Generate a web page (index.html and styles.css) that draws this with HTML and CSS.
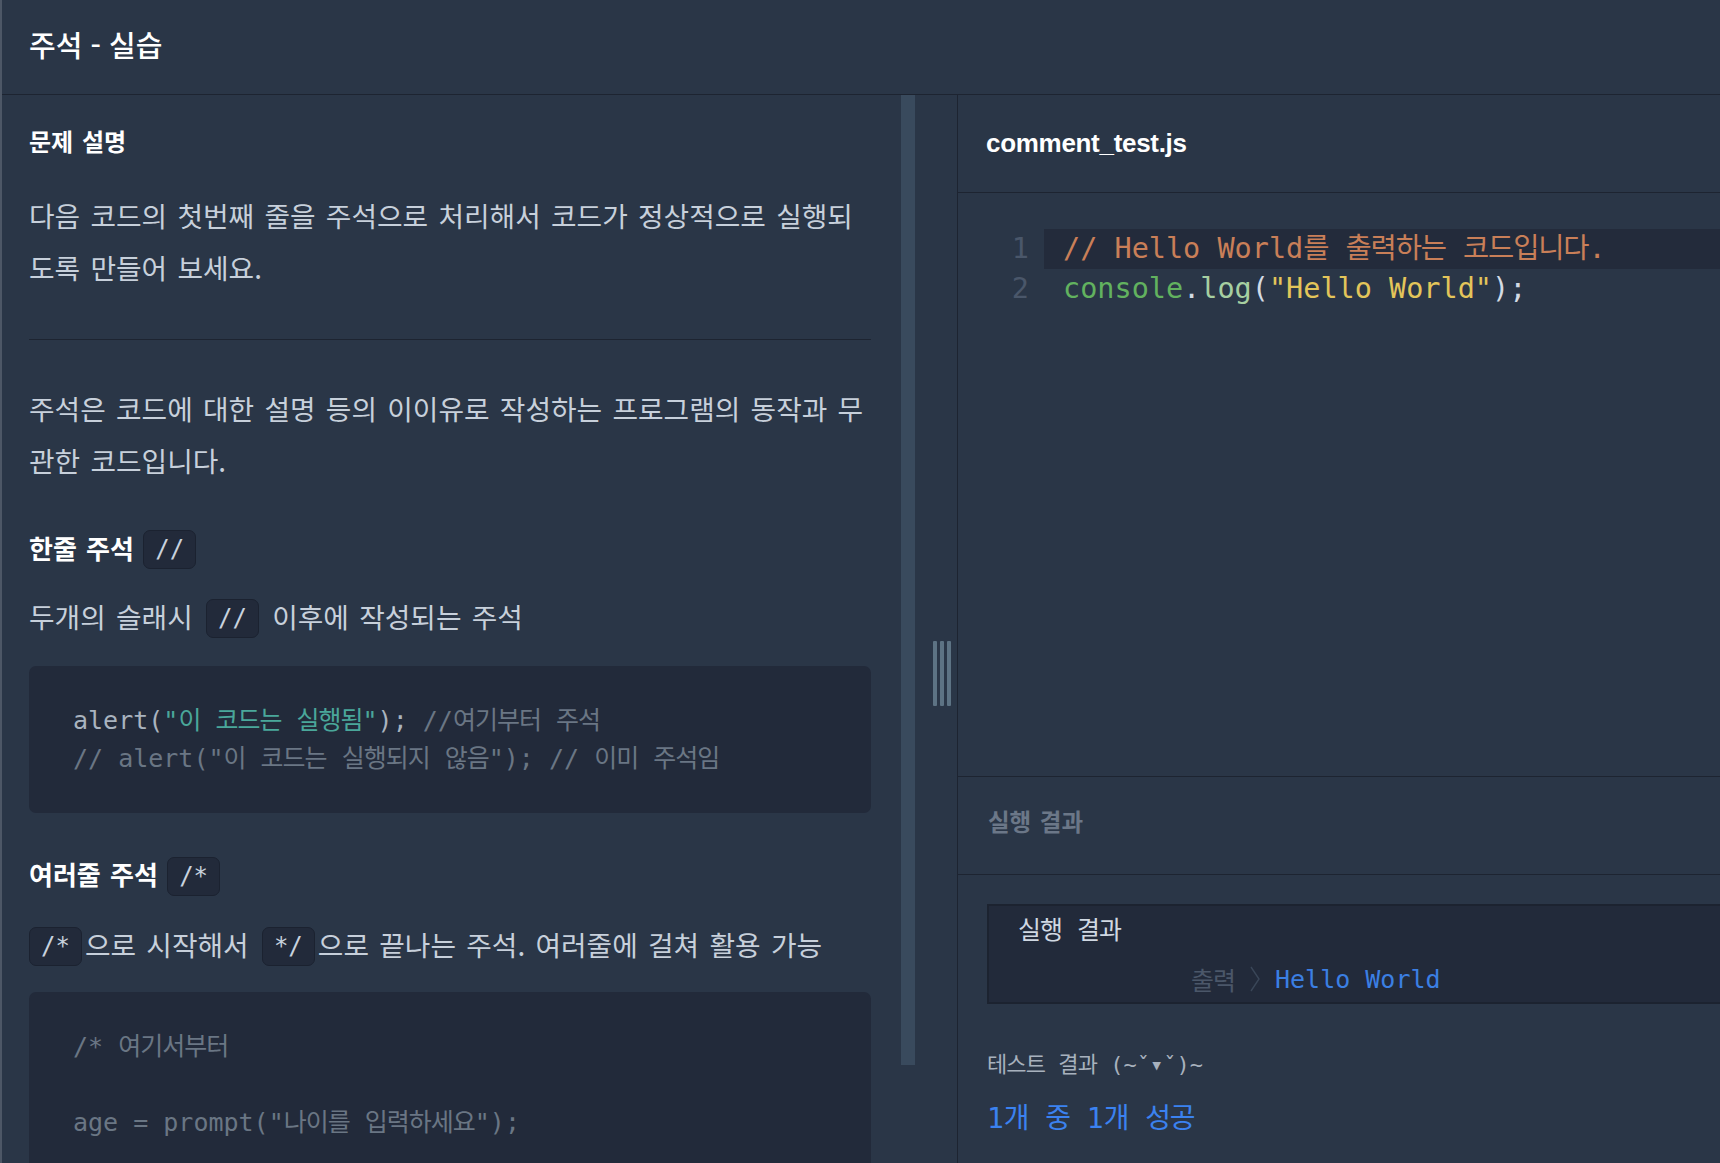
FILE: index.html
```html
<!DOCTYPE html>
<html lang="ko">
<head>
<meta charset="utf-8">
<title>주석 - 실습</title>
<link rel="stylesheet" href="styles.css">
</head>
<body>
<div class="app">
  <header class="topbar"><h1 class="title">주석 - 실습</h1></header>
  <main class="workspace">
    <section class="guide">
      <div class="guide-content">
        <h2 class="h-problem">문제 설명</h2>
        <p class="para para-first">다음 코드의 첫번째 줄을 주석으로 처리해서 코드가 정상적으로 실행되도록 만들어 보세요.</p>
        <hr class="rule">
        <p class="para para-gap">주석은 코드에 대한 설명 등의 이이유로 작성하는 프로그램의 동작과 무관한 코드입니다.</p>
        <h3 class="h-sub">한줄 주석 <code class="chip">//</code></h3>
        <p class="para para-line">두개의 슬래시 <code class="chip">//</code> 이후에 작성되는 주석</p>
        <div class="codeblock">
          <div class="cl"><span class="c-fn">alert(</span><span class="c-str">"<span class="k">이</span> <span class="k">코드는</span> <span class="k">실행됨</span>"</span><span class="c-fn">);</span> <span class="c-cmt">//<span class="k">여기부터</span> <span class="k">주석</span></span></div>
          <div class="cl"><span class="c-cmt">// alert("<span class="k">이</span> <span class="k">코드는</span> <span class="k">실행되지</span> <span class="k">않음</span>"); // <span class="k">이미</span> <span class="k">주석임</span></span></div>
        </div>
        <h3 class="h-sub h-sub-gap">여러줄 주석 <code class="chip">/*</code></h3>
        <p class="para para-line para-line-2"><code class="chip chip-first">/*</code>으로 시작해서 <code class="chip">*/</code>으로 끝나는 주석. 여러줄에 걸쳐 활용 가능</p>
        <div class="codeblock codeblock-2">
          <div class="cl"><span class="c-cmt">/* <span class="k">여기서부터</span></span></div>
          <div class="cl"></div>
          <div class="cl"><span class="c-cmt">age = prompt("<span class="k">나이를</span> <span class="k">입력하세요</span>");</span></div>
          <div class="cl"></div>
        </div>
      </div>
      <div class="scrollbar"><div class="thumb"></div></div>
    </section>
    <div class="splitter"><span class="grip"></span><span class="grip"></span><span class="grip"></span></div>
    <section class="ide">
      <div class="file-tab">comment_test.js</div>
      <div class="editor">
        <div class="row"><span class="ln">1</span><span class="src src-active"><span class="t-cmt">// Hello World<span class="k">를</span> <span class="k">출력하는</span> <span class="k">코드입니다</span>.</span></span></div>
        <div class="row"><span class="ln">2</span><span class="src"><span class="t-obj">console</span><span class="t-punc">.</span><span class="t-prop">log</span><span class="t-punc">(</span><span class="t-str">"Hello World"</span><span class="t-punc">);</span></span></div>
      </div>
      <div class="run-head">실행 결과</div>
      <div class="run-body">
        <div class="console">
          <div class="console-title"><span class="k">실행</span> <span class="k">결과</span></div>
          <div class="console-row">
            <span class="k out-label">출력</span>
            <svg class="chev" width="12" height="26" viewBox="0 0 12 26"><polyline points="2,1 10,13 2,25" fill="none" stroke="#3a4658" stroke-width="1.4"/></svg>
            <span class="out-val">Hello World</span>
          </div>
        </div>
        <div class="test-title"><span class="k">테스트</span> <span class="k">결과</span> (~ˇ▾ˇ)~</div>
        <div class="test-score">1<span class="k">개</span> <span class="k">중</span> 1<span class="k">개</span> <span class="k">성공</span></div>
      </div>
    </section>
  </main>
</div>
</body>
</html>
```

FILE: styles.css
```css
* { box-sizing: border-box; }

html, body {
  margin: 0;
  padding: 0;
}

body {
  width: 1720px;
  height: 1163px;
  overflow: hidden;
  background: #2a3647;
  color: #c7d0db;
  font-family: "Noto Sans CJK KR", "Noto Sans", sans-serif;
}

.app {
  height: 100%;
  display: flex;
  flex-direction: column;
  border-left: 2px solid #4d5766;
}

.topbar {
  height: 95px;
  flex: none;
  display: flex;
  align-items: center;
  padding: 0 0 7px 27px;
  border-bottom: 1px solid #1d2431;
}

.title {
  margin: 0;
  font-size: 29px;
  font-weight: 500;
  line-height: 36px;
  color: #ffffff;
}

.workspace {
  flex: 1;
  min-height: 0;
  display: flex;
}

/* ---------- left guide ---------- */
.guide {
  width: 913px;
  flex: none;
  display: flex;
  overflow: hidden;
}

.guide-content {
  width: 899px;
  flex: none;
  padding: 28px 30px 0 27px;
}

.h-problem {
  margin: 0;
  font-size: 24px;
  font-weight: 700;
  line-height: 36px;
  color: #ffffff;
  word-spacing: 2px;
}

.para {
  margin: 32px 0 0;
  font-size: 27.8px;
  line-height: 52px;
  word-spacing: 2.5px;
  word-break: break-all;
  color: #c7d0db;
}

.para-first { margin-top: 30px; }
.para-gap { margin-top: 42px; }
.para-line { margin-top: 21px; }
.para-line-2 { margin-top: 22px; }

.rule {
  margin: 46px 0 0;
  border: 0;
  height: 1px;
  background: #1d2431;
}

.h-sub {
  margin: 42px 0 0;
  font-size: 26px;
  font-weight: 700;
  line-height: 40px;
  color: #ffffff;
  word-spacing: 2px;
}

.h-sub-gap { margin-top: 41px; }

.chip {
  display: inline-block;
  vertical-align: middle;
  height: 39px;
  line-height: 37px;
  padding: 0 11px;
  margin: -4px 3px 0;
  font-family: "DejaVu Sans Mono", "Noto Sans CJK KR", monospace;
  font-size: 24px;
  font-weight: 400;
  color: #c8d2de;
  background: #222a3a;
  border: 1px solid #1b2230;
  border-radius: 7px;
  word-spacing: 0;
}

.h-sub .chip { margin-left: 0; }
.chip-first { margin-left: 0; }

.codeblock {
  margin-top: 24px;
  padding: 36px 44px 35px;
  background: #222a3a;
  border-radius: 7px;
  font-family: "DejaVu Sans Mono", "Noto Sans CJK KR", monospace;
  font-size: 25px;
  line-height: 38px;
}

.codeblock-2 { margin-top: 22px; }

.cl { white-space: pre; height: 38px; }

.k { letter-spacing: -0.04em; }

.c-fn { color: #a9b3bf; }
.c-str { color: #4aa79a; }
.c-cmt { color: #6a7684; }

/* ---------- scrollbar & splitter ---------- */
.scrollbar {
  width: 14px;
  flex: none;
}

.thumb {
  height: 970px;
  background: #394a5d;
}

.splitter {
  width: 42px;
  flex: none;
  display: flex;
  align-items: flex-start;
  gap: 3px;
  padding: 546px 0 0 18px;
}

.grip {
  width: 4px;
  height: 65px;
  background: #5d7384;
  border-radius: 1px;
}

/* ---------- right IDE ---------- */
.ide {
  flex: 1;
  min-width: 0;
  display: flex;
  flex-direction: column;
  border-left: 1px solid #1d2431;
  overflow: hidden;
}

.file-tab {
  height: 98px;
  flex: none;
  display: flex;
  align-items: center;
  padding-left: 28px;
  border-bottom: 1px solid #1d2431;
  font-family: "Liberation Sans", Arial, sans-serif;
  font-weight: 700;
  font-size: 26px;
  letter-spacing: -0.3px;
  color: #ffffff;
}

.editor {
  height: 584px;
  flex: none;
  padding-top: 36px;
  border-bottom: 1px solid #1d2431;
  font-family: "DejaVu Sans Mono", "Noto Sans CJK KR", monospace;
  font-size: 28.5px;
  line-height: 40px;
}

.row {
  display: flex;
  height: 40px;
}

.ln {
  width: 71px;
  flex: none;
  text-align: right;
  color: #4a576a;
}

.src {
  flex: 1;
  margin-left: 15px;
  padding-left: 19px;
  white-space: pre;
}

.src-active { background: #232b3b; }

.t-cmt { color: #c97f58; }
.t-obj { color: #62b25f; }
.t-prop { color: #a6cfa1; }
.t-punc { color: #d3dbe4; }
.t-str { color: #e3c55a; }

.run-head {
  height: 98px;
  flex: none;
  display: flex;
  align-items: center;
  padding: 0 0 10px 30px;
  border-bottom: 1px solid #1d2431;
  font-size: 23.5px;
  font-weight: 700;
  color: #6b7788;
  word-spacing: 2px;
}

.run-body {
  flex: 1;
  padding: 29px 0 0 29px;
}

.console {
  height: 100px;
  margin-right: -40px;
  padding: 8px 0 0 29px;
  background: #222a3a;
  border: 2px solid #1c2330;
  font-family: "DejaVu Sans Mono", "Noto Sans CJK KR", monospace;
  font-size: 25px;
}

.console-title {
  line-height: 34px;
  color: #d0d8e2;
  white-space: pre;
}

.console-row {
  margin: 11px 0 0 173px;
  height: 40px;
  display: flex;
  align-items: center;
  gap: 14px;
}

.out-label {
  color: #4b5769;
}

.chev { display: block; }

.out-val {
  color: #3b7fe3;
  white-space: pre;
}

.test-title {
  margin-top: 46px;
  line-height: 30px;
  font-family: "DejaVu Sans Mono", "Noto Sans CJK KR", monospace;
  font-size: 22px;
  color: #a7b1bd;
  white-space: pre;
}

.test-score {
  margin-top: 19px;
  line-height: 40px;
  font-family: "DejaVu Sans Mono", "Noto Sans CJK KR", monospace;
  font-size: 28px;
  color: #3b82f0;
  white-space: pre;
}
```
